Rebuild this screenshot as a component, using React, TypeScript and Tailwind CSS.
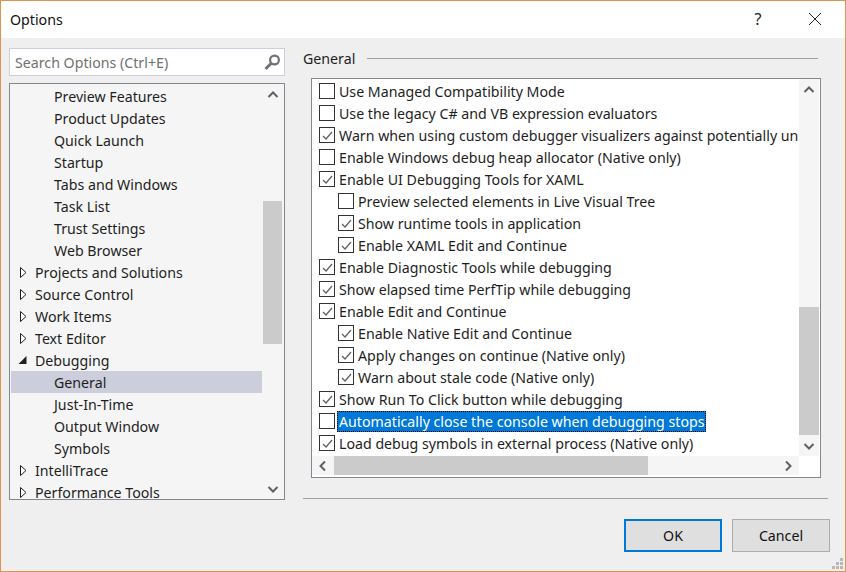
import React from "react";

const tree: { t: string; l: 0 | 1; arrow?: "open" | "closed"; sel?: boolean }[] = [
  { t: "Preview Features", l: 1 },
  { t: "Product Updates", l: 1 },
  { t: "Quick Launch", l: 1 },
  { t: "Startup", l: 1 },
  { t: "Tabs and Windows", l: 1 },
  { t: "Task List", l: 1 },
  { t: "Trust Settings", l: 1 },
  { t: "Web Browser", l: 1 },
  { t: "Projects and Solutions", l: 0, arrow: "closed" },
  { t: "Source Control", l: 0, arrow: "closed" },
  { t: "Work Items", l: 0, arrow: "closed" },
  { t: "Text Editor", l: 0, arrow: "closed" },
  { t: "Debugging", l: 0, arrow: "open" },
  { t: "General", l: 1, sel: true },
  { t: "Just-In-Time", l: 1 },
  { t: "Output Window", l: 1 },
  { t: "Symbols", l: 1 },
  { t: "IntelliTrace", l: 0, arrow: "closed" },
  { t: "Performance Tools", l: 0, arrow: "closed" },
];

const opts: { t: string; c: boolean; n?: boolean; sel?: boolean }[] = [
  { t: "Use Managed Compatibility Mode", c: false },
  { t: "Use the legacy C# and VB expression evaluators", c: false },
  { t: "Warn when using custom debugger visualizers against potentially unsafe processes", c: true },
  { t: "Enable Windows debug heap allocator (Native only)", c: false },
  { t: "Enable UI Debugging Tools for XAML", c: true },
  { t: "Preview selected elements in Live Visual Tree", c: false, n: true },
  { t: "Show runtime tools in application", c: true, n: true },
  { t: "Enable XAML Edit and Continue", c: true, n: true },
  { t: "Enable Diagnostic Tools while debugging", c: true },
  { t: "Show elapsed time PerfTip while debugging", c: true },
  { t: "Enable Edit and Continue", c: true },
  { t: "Enable Native Edit and Continue", c: true, n: true },
  { t: "Apply changes on continue (Native only)", c: true, n: true },
  { t: "Warn about stale code (Native only)", c: true, n: true },
  { t: "Show Run To Click button while debugging", c: true },
  { t: "Automatically close the console when debugging stops", c: false, sel: true },
  { t: "Load debug symbols in external process (Native only)", c: true },
];

function Chevron({ dir }: { dir: "up" | "down" | "left" | "right" }) {
  const pts = {
    up: "1.5,8 6,3.5 10.5,8",
    down: "1.5,4 6,8.5 10.5,4",
    left: "8,1.5 3.5,6 8,10.5",
    right: "4,1.5 8.5,6 4,10.5",
  }[dir];
  return (
    <svg width="12" height="12" viewBox="0 0 12 12" className="block">
      <polyline points={pts} fill="none" stroke="#606060" strokeWidth="2" />
    </svg>
  );
}

function Check() {
  return (
    <svg width="13" height="13" viewBox="0 0 13 13" className="block">
      <polyline points="2,7 5,10 11,3" fill="none" stroke="#5f5f5f" strokeWidth="1.2" />
    </svg>
  );
}

function Arrow({ kind }: { kind?: "open" | "closed" }) {
  if (kind === "open")
    return (
      <svg width="10" height="10" viewBox="0 0 10 10" className="block">
        <polygon points="8.5,1 8.5,9 0.5,9" fill="#1e1e1e" />
      </svg>
    );
  return (
    <svg width="10" height="14" viewBox="0 0 10 14" className="block">
      <polygon points="2.5,2.5 8,7.5 2.5,12.5" fill="#fff" stroke="#1e1e1e" strokeWidth="1" />
    </svg>
  );
}

export default function App() {
  return (
    <div className="w-[846px] h-[572px] flex flex-col overflow-hidden bg-[#efefef] border border-[#e0934f] text-[#1e1e1e] font-['Noto_Sans','Open_Sans',sans-serif] text-[14.2px] leading-[22px]">
      <div className="h-[37px] shrink-0 bg-white flex items-center pl-[9px] pb-[2px]">
        <span className="text-[#111] flex-1 pt-[2px]">Options</span>
        <span className="w-[20px] text-center text-[16px] text-[#222] mr-[40px]">?</span>
        <svg width="14" height="14" viewBox="0 0 14 14" className="mr-[23px]">
          <path d="M1 1L13 13M13 1L1 13" stroke="#222" strokeWidth="1" fill="none" />
        </svg>
      </div>

      <div className="flex-1 flex pl-[8px] pt-[10px] relative">
        <div className="w-[276px] shrink-0 flex flex-col gap-[7px]">
          <div className="h-[28px] bg-white border border-[#cccedb] flex items-center pl-[5px] pr-[2px]">
            <span className="flex-1 text-[#717171] pt-[2px]">Search Options (Ctrl+E)</span>
            <svg width="18" height="18" viewBox="0 0 18 18">
              <circle cx="10.5" cy="7" r="4.4" fill="none" stroke="#717171" strokeWidth="2.2" />
              <path d="M7.3 10.3L1.5 16" stroke="#717171" strokeWidth="3" />
            </svg>
          </div>
          <div className="h-[417px] bg-[#f5f5f5] border border-[#828790] flex overflow-hidden">
            <div className="flex-1 min-w-0 pl-[1px] pt-[1px] overflow-hidden">
              {tree.map((r) => (
                <div
                  key={r.t}
                  className={`h-[22px] flex items-center whitespace-nowrap ${r.sel ? "bg-[#cccedb]" : ""} ${r.l === 1 ? "pl-[43px]" : "pl-[24px]"}`}
                >
                  {r.arrow && (
                    <span className="-ml-[17px] w-[17px] flex items-center">
                      <Arrow kind={r.arrow} />
                    </span>
                  )}
                  <span className="pt-[2px]">{r.t}</span>
                </div>
              ))}
            </div>
            <div className="w-[21px] ml-[1px] pr-[2px] shrink-0 flex flex-col items-stretch bg-[#f5f5f5]">
              <div className="h-[21px] flex items-center justify-center">
                <Chevron dir="up" />
              </div>
              <div className="flex-1 pt-[96px] pb-[134px]">
                <div className="h-full bg-[#cbcbcb]" />
              </div>
              <div className="h-[21px] flex items-center justify-center">
                <Chevron dir="down" />
              </div>
            </div>
          </div>
        </div>

        <div className="ml-[18px] w-[527px] shrink-0 flex flex-col">
          <div className="h-[30px] flex items-start">
            <span className="w-[64px] leading-[22px] text-[#1e1e1e]">General</span>
            <div className="mt-[10px] h-px w-[451px] bg-[#a0a0a0]" />
          </div>
          <div className="ml-[8px] w-[510px] h-[400px] bg-white border border-[#828790] flex flex-col overflow-hidden">
            <div className="h-[377px] flex overflow-hidden">
              <div className="flex-1 min-w-0 overflow-hidden pt-[1px]">
                {opts.map((o) => (
                  <div key={o.t} className={`h-[22px] flex items-center whitespace-nowrap ${o.n ? "pl-[26px]" : "pl-[7px]"}`}>
                    <span className="w-[16px] h-[16px] shrink-0 border border-[#333] bg-white flex items-center justify-center">
                      {o.c && <Check />}
                    </span>
                    <span
                      className={
                        o.sel
                          ? "ml-[2px] pl-[2px] pr-[1px] mt-[1px] pt-[1px] h-[21px] flex items-center bg-[#0078d7] text-white outline-1 outline-dotted -outline-offset-1 outline-black"
                          : "ml-[4px] pt-[2px]"
                      }
                    >
                      {o.t}
                    </span>
                  </div>
                ))}
              </div>
              <div className="w-[21px] pr-[1px] shrink-0 flex flex-col bg-white">
                <div className="h-[21px] flex items-center justify-center bg-[#f5f5f5]">
                  <Chevron dir="up" />
                </div>
                <div className="flex-1 pt-[207px] bg-[#f5f5f5]">
                  <div className="h-full bg-[#cbcbcb]" />
                </div>
                <div className="h-[21px] flex items-center justify-center bg-[#f5f5f5]">
                  <Chevron dir="down" />
                </div>
              </div>
            </div>
            <div className="h-[19px] flex bg-[#f5f5f5] w-[487px]">
              <div className="w-[22px] flex items-center justify-center">
                <Chevron dir="left" />
              </div>
              <div className="w-[314px] bg-[#cbcbcb]" />
              <div className="flex-1" />
              <div className="w-[22px] flex items-center justify-center">
                <Chevron dir="right" />
              </div>
            </div>
          </div>
          <div className="mt-[20px] h-px w-[525px] bg-[#a0a0a0]" />
          <div className="mt-[20px] flex justify-end gap-[10px]">
            <div className="w-[98px] h-[33px] bg-[#dfdfdf] border-2 border-[#0078d7] flex items-center justify-center text-[#111]">OK</div>
            <div className="w-[98px] h-[33px] bg-[#dfdfdf] border border-[#acacac] flex items-center justify-center text-[#111]">Cancel</div>
          </div>
        </div>

        <svg width="12" height="12" viewBox="0 0 12 12" className="absolute right-[1px] bottom-[1px]">
          <path d="M8 0h3v3H8zM4 4h3v3H4zM8 4h3v3H8zM0 8h3v3H0zM4 8h3v3H4zM8 8h3v3H8z" fill="#b8b8b8" />
        </svg>
      </div>
    </div>
  );
}
